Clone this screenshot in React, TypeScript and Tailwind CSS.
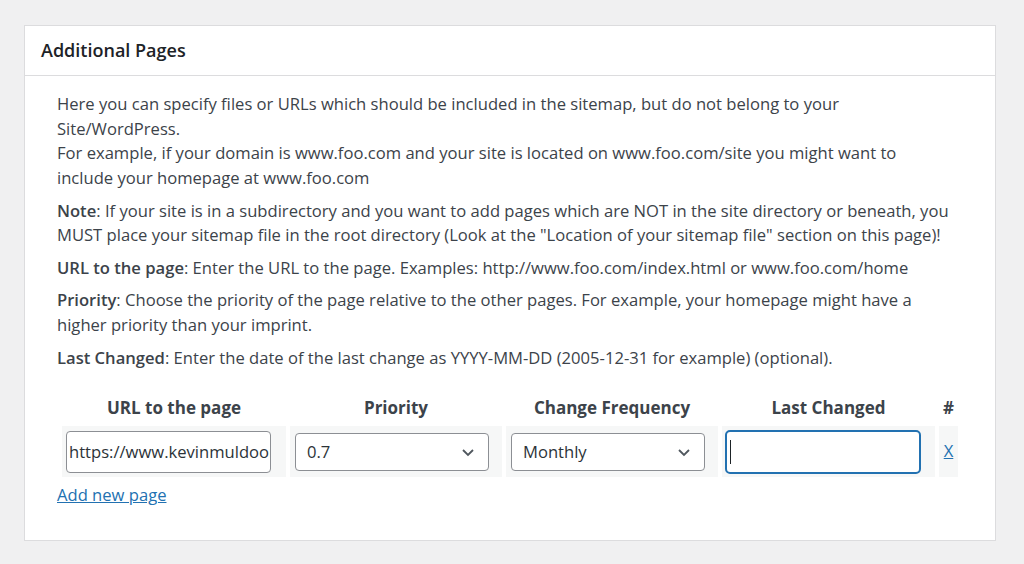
import React from "react";

const cell = "bg-[#f6f7f7] p-0 align-middle";

const Chevron = () => (
  <svg width="16" height="16" viewBox="0 0 16 16" className="absolute right-[12px] top-1/2 -translate-y-1/2">
    <path d="M3 6l5 5 5-5" fill="none" stroke="#50575e" strokeWidth="1.8" />
  </svg>
);

const Select: React.FC<{ value: string }> = ({ value }) => (
  <div className="relative h-[38px] w-[194px] rounded-[4px] border border-[#8c8f94] bg-white pl-[11px] text-[16.6px] leading-[36px] text-[#2c3338]">
    {value}
    <Chevron />
  </div>
);

export default function App() {
  return (
    <div
      className="min-h-[564px] w-[1024px] bg-[#f0f0f1] pt-[25px] pl-[24px]"
      style={{ fontFamily: '"Open Sans", "Noto Sans", sans-serif' }}
    >
      <div className="h-[516px] w-[972px] border border-[#dcdcde] bg-white">
        <div className="flex h-[50px] items-center border-b border-[#dcdcde] pl-[16px]">
          <h2 className="text-[18px] font-semibold text-[#1d2327]">Additional Pages</h2>
        </div>
        <div className="pt-[16px] pr-[45px] pl-[32px] text-[16.6px] leading-[24.7px] text-[#3c434a]">
          <p>
            Here you can specify files or URLs which should be included in the sitemap, but do not belong to your
            Site/WordPress.
            <br />
            For example, if your domain is www.foo.com and your site is located on www.foo.com/site you might want to
            include your homepage at www.foo.com
          </p>
          <p className="mt-[7.8px]">
            <b className="font-semibold">Note</b>: If your site is in a subdirectory and you want to add pages which
            are NOT in the site directory or beneath, you MUST place your sitemap file in the root directory (Look at
            the "Location of your sitemap file" section on this page)!
          </p>
          <p className="mt-[7.8px]">
            <b className="font-semibold">URL to the page</b>: Enter the URL to the page. Examples:
            http://www.foo.com/index.html or www.foo.com/home
          </p>
          <p className="mt-[7.8px]">
            <b className="font-semibold">Priority</b>: Choose the priority of the page relative to the other pages. For
            example, your homepage might have a higher priority than your imprint.
          </p>
          <p className="mt-[7.8px]">
            <b className="font-semibold">Last Changed</b>: Enter the date of the last change as YYYY-MM-DD (2005-12-31
            for example) (optional).
          </p>

          <table className="mt-[25px] ml-[1px] w-[904px] table-fixed border-separate border-spacing-x-[4px] border-spacing-y-[0px]">
            <thead>
              <tr className="h-[31px] text-[17px] font-bold leading-[25px] text-[#3c434a]">
                <th className="w-[224px] align-top">URL to the page</th>
                <th className="w-[212px] align-top">Priority</th>
                <th className="w-[212px] align-top">Change Frequency</th>
                <th className="w-[213px] align-top">Last Changed</th>
                <th className="w-[19px] align-top">#</th>
              </tr>
            </thead>
            <tbody>
              <tr className="h-[51px]">
                <td className={cell}>
                  <div className="ml-[4px] h-[42px] w-[205px] overflow-hidden whitespace-nowrap rounded-[4px] border border-[#8c8f94] bg-white pl-[2px] text-[16.6px] leading-[40px] text-[#2c3338]">
                    https://www.kevinmuldoon.com/
                  </div>
                </td>
                <td className={cell}>
                  <div className="ml-[5px]">
                    <Select value="0.7" />
                  </div>
                </td>
                <td className={cell}>
                  <div className="ml-[5px]">
                    <Select value="Monthly" />
                  </div>
                </td>
                <td className={cell}>
                  <div className="ml-[3px] flex h-[44px] w-[196px] items-center rounded-[5px] border-2 border-[#2271b1] bg-white pl-[3px]">
                    <span className="h-[24px] w-px bg-[#1d2327]" />
                  </div>
                </td>
                <td className={`${cell} text-center`}>
                  <a className="text-[16.6px] text-[#2271b1] underline" href="#">
                    X
                  </a>
                </td>
              </tr>
            </tbody>
          </table>
          <a className="mt-[6px] block w-fit text-[16.6px] text-[#2271b1] underline" href="#">
            Add new page
          </a>
        </div>
      </div>
    </div>
  );
}
